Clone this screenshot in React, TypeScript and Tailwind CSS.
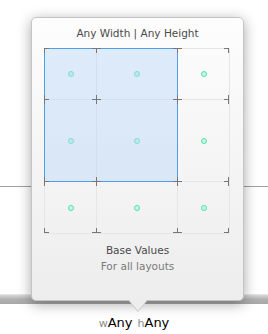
import React from "react";

const cols = [0, 52, 133, 184];
const rows = [0, 51, 133, 184];

function Ticks() {
  const segs: string[] = [];
  const L = 4;
  cols.forEach((x, i) => {
    rows.forEach((y, j) => {
      const x0 = i === 0 ? x : x - L;
      const x1 = i === cols.length - 1 ? x : x + L;
      const y0 = j === 0 ? y : y - L;
      const y1 = j === rows.length - 1 ? y : y + L;
      segs.push(`M${x0} ${y + 0.5}H${x1 + 1}`);
      segs.push(`M${x + 0.5} ${y0}V${y1 + 1}`);
    });
  });
  return (
    <svg className="absolute left-0 top-0 pointer-events-none" width={185} height={185}>
      <path d={segs.join(" ")} stroke="#767676" strokeWidth={1} fill="none" />
    </svg>
  );
}

function Dot() {
  return <div className="w-[6px] h-[6px] rounded-full border-[1.5px] border-[#4fe3ab] bg-[#c8f5e0]" />;
}

export default function App() {
  const cells = [0, 1, 2, 3, 4, 5, 6, 7, 8];
  return (
    <div
      className="relative w-[268px] h-[334px] overflow-hidden bg-white"
      style={{ fontFamily: '"Lucida Grande", "DejaVu Sans", sans-serif' }}
    >
      {/* background window content */}
      <div className="absolute left-0 right-0 top-[186px] h-px bg-[#a0a0a0]" />
      <div className="absolute left-0 right-0 top-[294px] h-[10px] bg-gradient-to-b from-[#d8d8d8] via-[#b0b0b0] to-[#a8a8a8] border-t border-[#e4e4e4]" />
      <div className="absolute left-0 right-0 top-[313px] flex justify-center items-baseline">
        <span className="text-[11px] text-[#8a8a8a]">w</span>
        <span className="text-[13px] text-black">Any</span>
        <span className="text-[11px] text-[#8a8a8a] ml-[5px]">h</span>
        <span className="text-[13px] text-black">Any</span>
      </div>

      {/* popover */}
      <div className="absolute left-[31px] top-[17px] w-[213px] h-[284px] rounded-[5px] border border-[#c4c4c4] bg-gradient-to-b from-[#fdfdfd] to-[#ededed] shadow-[0_3px_14px_rgba(0,0,0,0.35)] flex flex-col items-center">
        <div className="mt-[8px] text-[10.5px] leading-[15px] text-[#4a4a4a]">Any Width | Any Height</div>
        <div className="relative mt-[7px] ml-[-1px]">
          <div className="grid grid-cols-[52px_81px_52px] grid-rows-[51px_82px_52px] border-l border-t border-[#e6e6e6]">
            {cells.map((c) => (
              <div key={c} className="border-r border-b border-[#e6e6e6] flex items-center justify-center">
                <Dot />
              </div>
            ))}
          </div>
          <div className="absolute left-0 top-0 w-[134px] h-[134px] border border-[#4f9fe6] bg-[rgba(185,215,248,0.45)] pointer-events-none" />
          <Ticks />
        </div>
        <div className="mt-[9px] text-[10.5px] leading-[15px] text-[#4a4a4a]">Base Values</div>
        <div className="mt-[1px] text-[10.5px] leading-[15px] text-[#7a7a7a]">For all layouts</div>
        <div className="absolute left-1/2 bottom-[-12px] -translate-x-1/2 w-0 h-0 border-l-[10px] border-r-[10px] border-t-[12px] border-l-transparent border-r-transparent border-t-[#c4c4c4]" />
        <div className="absolute left-1/2 bottom-[-11px] -translate-x-1/2 w-0 h-0 border-l-[9px] border-r-[9px] border-t-[11px] border-l-transparent border-r-transparent border-t-[#ededed]" />
      </div>
    </div>
  );
}
